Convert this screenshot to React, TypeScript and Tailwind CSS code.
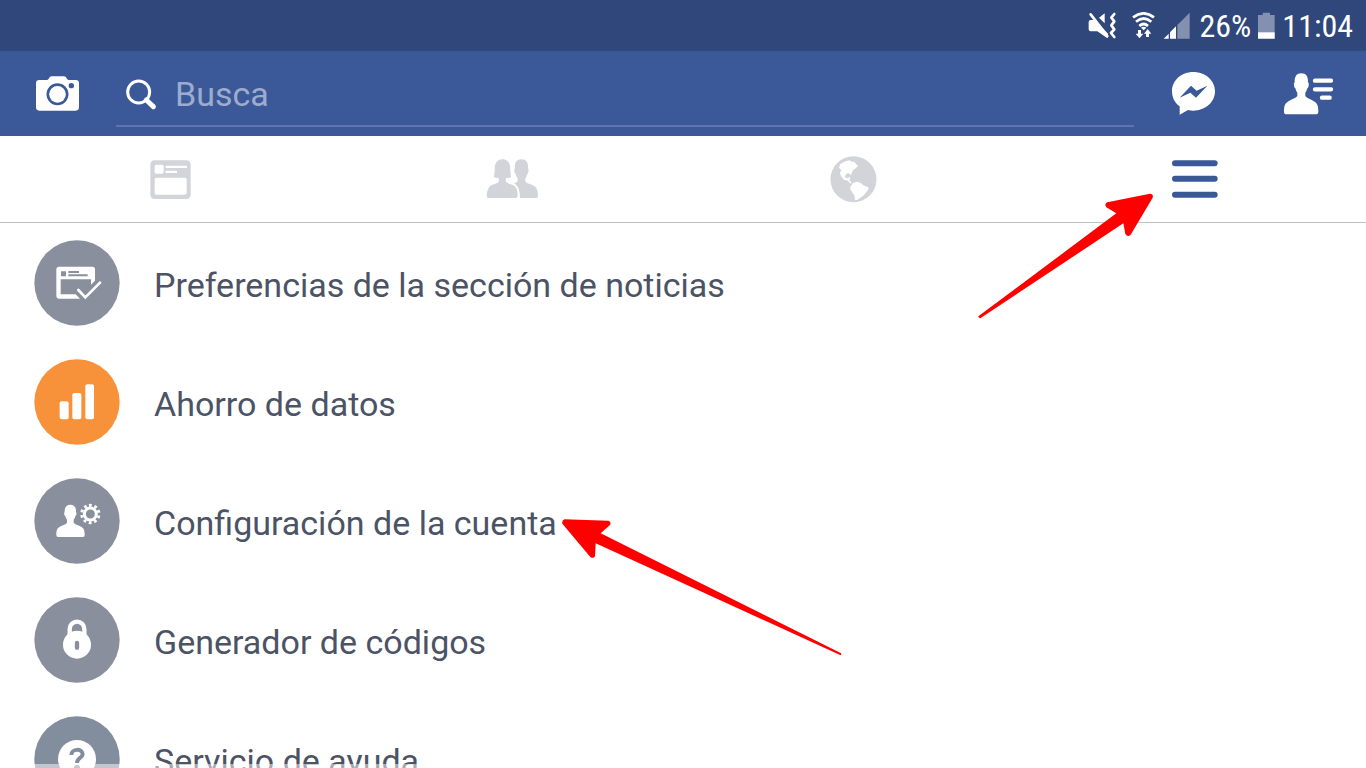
import type { ReactNode } from "react";

type GlyphProps = { size: string; box: string; children: ReactNode };

function Glyph({ size, box, children }: GlyphProps) {
  return (
    <svg className={`shrink-0 ${size}`} viewBox={box} fill="currentColor" aria-hidden="true">
      {children}
    </svg>
  );
}

function StatusBar() {
  return (
    <div className="flex h-[51px] shrink-0 items-center justify-end bg-[#2f477a] pr-[13px] text-white">
      <Glyph size="mr-[15px] h-[27px] w-[29px]" box="22 36 87 81">
        <path d="M24 66Q24 60 30 60H43L82 101V113H78L50 94H30Q24 94 24 88Z" />
        <path d="M55 53L72 40V70Z" />
        <path d="M30 43L80 108" stroke="currentColor" strokeWidth="8" strokeLinecap="round" />
        <path d="M101 42L92 53L101 64L92 76L101 88L91 99L101 111" fill="none" stroke="currentColor" strokeWidth="8" strokeLinejoin="round" strokeLinecap="round" />
      </Glyph>
      <Glyph size="mr-[8px] h-[27px] w-[23px]" box="152 36 69 81">
        <g fill="none" stroke="currentColor" strokeWidth="8">
          <path d="M155 52Q187 28 218 52" />
          <path d="M164 65Q187 46 210 65" />
          <path d="M174 78Q187 66 200 78" />
        </g>
        <path d="M179 83Q187 77 195 83L187 91Z" />
        <path d="M170 90H179V101H186L174.500 115L163 101H170Z" />
        <path d="M194 111H203V101H210L199 87L188 101H194Z" />
      </Glyph>
      <Glyph size="mr-[9px] h-[27px] w-[28px]" box="245 36 84 81">
        <path d="M247 116L262 101V116Z" />
        <path d="M266 97L284 79V116H266Z" />
        <path d="M288 75L325 38V116H288Z" fill="#8490af" />
      </Glyph>
      <span className="font-[Roboto_Condensed,Roboto,sans-serif] text-[32px] leading-[50px]">26%</span>
      <Glyph size="mx-[7px] h-[27px] w-[17px]" box="529 36 51 81">
        <path d="M529 45H543V38H565V45H579V116H529Z" fill="#8490af" />
        <path d="M529 97H579V116H529Z" />
      </Glyph>
      <span className="font-[Roboto_Condensed,Roboto,sans-serif] text-[32px] leading-[50px]">11:04</span>
    </div>
  );
}

function SearchHeader() {
  return (
    <header className="flex h-[85px] shrink-0 items-center bg-[#3b5998] pr-[33px] pl-9 text-white">
      <button aria-label="Cámara" className="mr-[37px]">
        <Glyph size="h-[35px] w-[43px]" box="108 79 129 105">
          <path fillRule="evenodd" d="M118 91H140Q144 91 146 87Q149 80 156 80H191Q198 80 201 87Q203 91 207 91H227Q237 91 237 101V173Q237 183 227 183H118Q108 183 108 173V101Q108 91 118 91ZM172.500 101A33 33 0 1 0 172.500 167A33 33 0 1 0 172.500 101ZM214 100A8 8 0 1 0 214 116A8 8 0 1 0 214 100Z" />
          <circle cx="172.500" cy="134" r="25" />
        </Glyph>
      </button>
      <label className="mt-2 mr-[38px] flex h-[68px] min-w-0 flex-1 items-center self-start border-b-2 border-[#5c77ae] pt-1 pl-2.5">
        <Glyph size="mr-[18px] h-[31px] w-[31px]" box="377 85 93 93">
          <circle cx="415" cy="124" r="33" fill="none" stroke="currentColor" strokeWidth="9" />
          <path d="M438 148L459 168" stroke="currentColor" strokeWidth="15" strokeLinecap="round" />
        </Glyph>
        <input
          type="search"
          aria-label="Busca"
          placeholder="Busca"
          className="min-w-0 flex-1 bg-transparent font-[Roboto,sans-serif] text-[34px] leading-[50px] outline-none placeholder:text-[#9dacce]"
        />
      </label>
      <button aria-label="Messenger" className="mr-[69px]">
        <Glyph size="h-[43px] w-[43px]" box="185 56 129 129">
          <path fillRule="evenodd" d="M249 56C285 56 314 81 314 114C314 147 285 172 249 172Q241 172 233 170L208 184V159C194 149 185 133 185 114C185 81 213 56 249 56ZM208 133L242 97L259 112L291 97L257 133L240 118Z" />
        </Glyph>
      </button>
      <button aria-label="Contactos">
        <Glyph size="h-[42px] w-[49px]" box="521 53 147 126">
          <path d="M573 54C587 54 594 64 593 81Q597 84 595 91Q594 97 591 99Q589 107 585 112V122C590 129 599 131 608 136C622 143 624 151 624 169Q624 177 616 177H529Q521 177 521 169C521 151 523 144 537 136C546 131 556 129 561 122V112Q557 107 555 99Q552 97 551 91Q549 84 553 81C552 64 559 54 573 54Z" />
          <path d="M614 76H662M614 102H662M635 127H658" stroke="currentColor" strokeWidth="13" strokeLinecap="round" />
        </Glyph>
      </button>
    </header>
  );
}

function PointerToMenu() {
  return (
    <svg className="pointer-events-none absolute top-[57px] right-1/2 z-10 mr-[41px] h-[126px] w-[176px]" viewBox="56 39 528 378" fill="#ff0000" aria-hidden="true">
      <path d="M572 41Q583 42 580 53L514 164Q505 173 498 162L492 130L64 414Q58 416 57 409L471 100L441 82Q434 72 444 67Z" />
    </svg>
  );
}

function PointerToAccount() {
  return (
    <svg className="pointer-events-none absolute top-6 left-full z-10 ml-[4px] h-[138px] w-[282px]" viewBox="34 30 846 414" fill="#ff0000" aria-hidden="true">
      <path d="M44 34L176 38Q186 42 181 51L153 76L873 435Q877 438 873 442L138 106L136 145Q131 153 122 147L38 47Q36 37 44 34Z" />
    </svg>
  );
}

function Tabs() {
  const tab = "relative flex items-center justify-center";
  return (
    <nav className="grid h-[87px] shrink-0 grid-cols-4 border-b border-[#c1c1c3] bg-white text-[#d2d4da]">
      <button aria-label="Noticias" className={tab}>
        <Glyph size="h-[39px] w-[41px]" box="61 43 123 117">
          <path fillRule="evenodd" d="M76 44H169Q183 44 183 58V146Q183 160 169 160H76Q62 160 62 146V58Q62 44 76 44ZM80 57Q75 57 75 62V79Q75 84 80 84H97Q102 84 102 79V62Q102 57 97 57ZM108 60V67H172V60ZM108 75V82H142V75ZM80 96Q75 96 75 101V142Q75 147 80 147H166Q171 147 171 142V101Q171 96 166 96Z" />
        </Glyph>
      </button>
      <button aria-label="Amigos" className={tab}>
        <Glyph size="h-[40px] w-[53px]" box="78 41 159 120">
          <path d="M127 42C145 42 152 56 151 77L153 95Q146 99 138 98L137 107C140 114 151 116 160 120C171 126 173 138 173 152Q173 158 167 158H86Q80 158 80 152C81 138 84 126 94 120C103 116 114 114 117 107L116 98Q108 99 102 95L104 77C103 56 110 42 127 42Z" />
          <path d="M184 42C198 42 206 51 204 69Q208 73 204 83Q202 86 201 88Q200 95 196 99V108C200 115 211 116 221 121C232 127 234 139 234 152Q234 158 228 158H180C179 136 177 124 162 114Q170 112 173 107V99Q168 94 167 86Q163 83 163 76Q162 71 165 68C163 51 171 42 184 42Z" />
        </Glyph>
      </button>
      <button aria-label="Notificaciones" className={tab}>
        <Glyph size="h-[47px] w-[47px]" box="61 32 141 141">
          <circle cx="131.500" cy="102" r="69" />
          <path fill="#fff" d="M88 67L92 56L104 49L119 45L123 48L127 55L134 51L141 58L145 61L138 69L130 75L126 84L124 90L117 84L109 86L106 93L110 99L116 98L119 94L122 98L119 104L124 110L127 115L120 112L114 106L103 103L94 93L91 83L95 75Z" />
          <path fill="#fff" d="M130 113L142 109L153 113L161 120L176 126L176 132L168 143L161 151L151 158L143 164L136 164L134 150L127 140L121 130L124 121Z" />
          <path fill="#fff" d="M121 48L130 49L138 53L133 57L124 53Z" />
        </Glyph>
      </button>
      <button aria-label="Menú" className={`${tab} text-[#3b5998]`}>
        <Glyph size="h-[38px] w-[46px]" box="187 316 138 114">
          <path d="M196 325.500H315M196 372.500H315M196 420H315" stroke="currentColor" strokeWidth="18" strokeLinecap="round" />
        </Glyph>
        <PointerToMenu />
      </button>
    </nav>
  );
}

const items = [
  {
    label: "Preferencias de la sección de noticias",
    circle: "size-[86px] text-[#898f9c]",
    icon: (
      <g>
        <path fill="#fff" fillRule="evenodd" d="M118 113H217Q225 113 225 121V155L213 167V151H122V196H167L180 209H118Q109 209 109 200V121Q109 113 118 113ZM123 127V142H138V127ZM145 126V132H177V126ZM145 136V142H203V136Z" />
        <path d="M175 183L196 205L240 161" fill="none" stroke="#fff" strokeWidth="8" strokeLinecap="round" />
      </g>
    ),
  },
  {
    label: "Ahorro de datos",
    circle: "size-[86px] text-[#f8923a]",
    icon: (
      <g fill="#fff">
        <rect x="119" y="160" width="27" height="54" rx="6" />
        <rect x="157" y="135" width="27" height="79" rx="6" />
        <rect x="196" y="109" width="26" height="105" rx="6" />
      </g>
    ),
  },
  {
    label: "Configuración de la cuenta",
    circle: "size-[86px] text-[#898f9c]",
    icon: (
      <g>
        <path fill="#fff" d="M151 113C163 113 169 121 168 135Q172 141 166 148Q165 154 161 158V167C166 173 174 174 181 178C192 183 194 190 194 205Q194 210 189 210H114Q109 210 109 205C109 190 111 183 122 178C129 174 137 173 141 167V158Q137 154 136 148Q130 141 134 135C133 121 139 113 151 113Z" />
        <circle cx="211" cy="141" r="18" fill="none" stroke="#fff" strokeWidth="9" />
        <circle cx="211" cy="141" r="26" fill="none" stroke="#fff" strokeWidth="9" strokeDasharray="8.150 8.186" transform="rotate(-99 211 141)" />
      </g>
    ),
    pointer: <PointerToAccount />,
  },
  {
    label: "Generador de códigos",
    circle: "size-[86px] text-[#898f9c]",
    icon: (
      <g>
        <path d="M149 153V129A22 22 0 0 1 193 129V153" fill="none" stroke="#fff" strokeWidth="13" />
        <circle cx="171" cy="176" r="42" fill="#fff" />
        <path d="M171 171V185" stroke="currentColor" strokeWidth="13" strokeLinecap="round" />
      </g>
    ),
  },
  {
    label: "Servicio de ayuda",
    circle: "size-[86px] text-[#828d9e]",
    icon: (
      <g>
        <circle cx="171" cy="162" r="57" fill="#fff" />
        <path d="M154 150C154 130 188 130 188 147C188 159 171 158 171 174" fill="none" stroke="currentColor" strokeWidth="12" />
        <circle cx="171" cy="189" r="9" fill="currentColor" />
      </g>
    ),
  },
];

export default function App() {
  return (
    <div className="flex h-dvh flex-col overflow-hidden bg-white font-[Roboto,sans-serif]">
      <StatusBar />
      <SearchHeader />
      <Tabs />
      <main className="relative min-h-0 flex-1 overflow-hidden">
        <ul>
          {items.map((item) => (
            <li key={item.label}>
              <a href="#" className="flex h-[119px] items-center pl-[34px]">
                <Glyph size={item.circle} box="42 33 258 258">
                  <circle cx="171" cy="162" r="128" />
                  {item.icon}
                </Glyph>
                <span className="relative ml-[34px] pt-1 text-[34px] leading-[50px] whitespace-nowrap text-[#4b5365]">
                  {item.label}
                  {item.pointer}
                </span>
              </a>
            </li>
          ))}
        </ul>
        <div className="absolute inset-x-0 bottom-0 h-1 bg-white/50" />
      </main>
    </div>
  );
}
